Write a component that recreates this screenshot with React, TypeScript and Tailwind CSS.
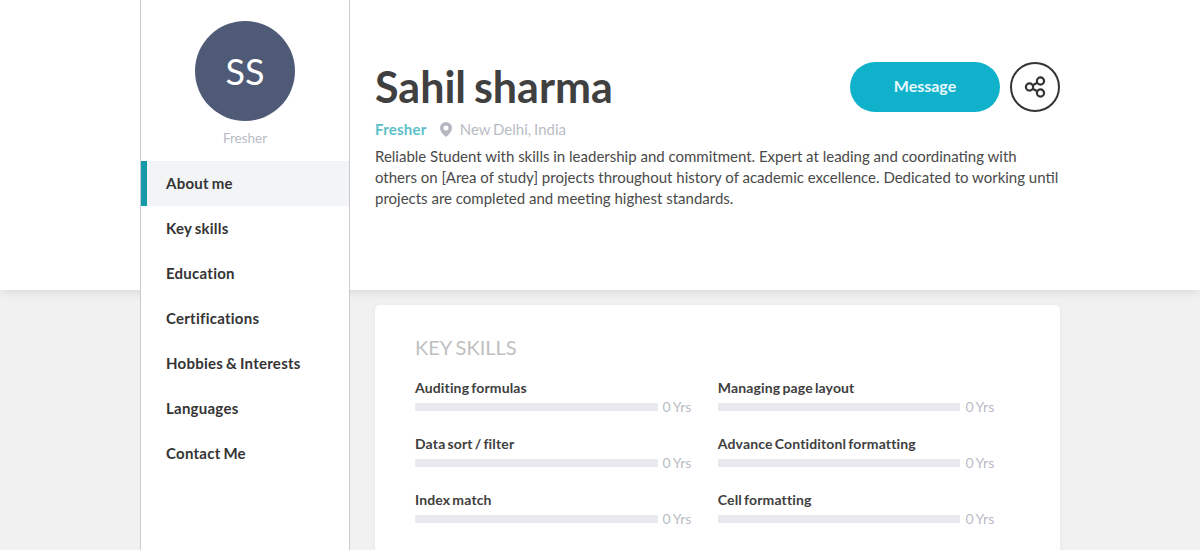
import React from "react";

const nav = ["About me", "Key skills", "Education", "Certifications", "Hobbies & Interests", "Languages", "Contact Me"];
const skills = ["Auditing formulas", "Managing page layout", "Data sort / filter", "Advance Contiditonl formatting", "Index match", "Cell formatting"];

export default function App() {
  return (
    <div className="relative h-[550px] w-[1200px] overflow-hidden bg-[#f1f1f1] font-['Lato',sans-serif]">
      <div className="absolute inset-x-0 top-0 h-[290px] bg-white shadow-[0_2px_10px_rgba(0,0,0,0.1)]" />
      <div className="relative flex h-full pl-[140px]">
        <aside className="h-full w-[210px] shrink-0 border-x border-[#c8cbd3] bg-white pt-[21px]">
          <div className="mx-auto flex h-[100px] w-[100px] items-center justify-center rounded-full bg-[#4f5b76] text-[36px] leading-none text-white">SS</div>
          <p className="mt-[9px] text-center text-[13.5px] leading-[17px] text-[#b9bcc5]">Fresher</p>
          <nav className="mt-[14px]">
            {nav.map((n, i) => (
              <div
                key={n}
                className={
                  i === 0
                    ? "flex h-[45px] items-center border-l-[6px] border-[#1899a8] bg-[#f3f4f6] pl-[19px] text-[15px] font-bold tracking-[0.25px] [word-spacing:-1px] text-[#343434]"
                    : "flex h-[45px] items-center pl-[25px] text-[15px] font-bold tracking-[0.25px] [word-spacing:-1px] text-[#343434]"
                }
              >
                {n}
              </div>
            ))}
          </nav>
        </aside>
        <main className="ml-[25px] w-[685px]">
          <div className="h-[305px] pt-[62px]">
            <div className="flex items-start justify-between">
              <h1 className="-mt-[1px] text-[43px] font-bold leading-[52px] [word-spacing:-2.5px] text-[#404040]">Sahil sharma</h1>
              <div className="flex items-center gap-[10px]">
                <button className="h-[50px] w-[150px] rounded-full bg-[#10b2cb] pb-[2px] text-[16px] font-bold text-[#e8f8fb]">Message</button>
                <div className="flex h-[50px] w-[50px] items-center justify-center rounded-full border-2 border-[#343434]">
                  <svg width="24" height="24" viewBox="0 0 24 24" fill="none" stroke="#343434" strokeWidth="2.2">
                    <circle cx="17.5" cy="6" r="3.6" />
                    <circle cx="6.500" cy="12" r="3.6" />
                    <circle cx="17.5" cy="18" r="3.6" />
                    <path d="M9.700 10.300 14.300 7.700M9.700 13.700l4.600 2.600" />
                  </svg>
                </div>
              </div>
            </div>
            <div className="mt-[6px] flex items-center text-[15px] leading-[20px]">
              <span className="font-bold tracking-[0.25px] text-[#5cbfc9]">Fresher</span>
              <svg className="ml-[13px]" width="12" height="15" viewBox="0 0 12 15">
                <path fillRule="evenodd" fill="#b5b8c1" d="M6 0a6 6 0 0 1 6 6c0 3.500-4 7.500-6 9-2-1.500-6-5.500-6-9a6 6 0 0 1 6-6Zm0 3.500a2.500 2.500 0 1 0 0 5 2.500 2.500 0 0 0 0-5Z" />
              </svg>
              <span className="ml-[8px] [word-spacing:-1px] text-[#b9bcc5]">New Delhi, India</span>
            </div>
            <p className="mt-[6.5px] text-[15px] leading-[21px] text-[#4a4a4a]">
              Reliable Student with skills in leadership and commitment. Expert at leading and coordinating with others on [Area of study] projects throughout history of academic excellence. Dedicated to working until projects are completed and meeting highest standards.
            </p>
          </div>
          <section className="h-[300px] rounded-[5px] bg-white px-[40px] pt-[29px] shadow-[0_0_6px_rgba(0,0,0,0.04)]">
            <h2 className="text-[20px] leading-[26px] [word-spacing:-1px] text-[#c0c0c0]">KEY SKILLS</h2>
            <div className="mt-[18px] grid grid-cols-[277px_277px] gap-x-[25.8px] gap-y-[18px]">
              {skills.map((s) => (
                <div key={s}>
                  <p className="text-[14px] font-bold leading-[20px] tracking-[0.15px] [word-spacing:-1.5px] text-[#404040]">{s}</p>
                  <div className="flex h-[18px] items-center">
                    <div className="h-[8px] w-[242.6px] shrink-0 bg-[#e9eaee]" />
                    <span className="mb-[2px] ml-[5px] whitespace-nowrap text-[14px] [word-spacing:-1px] text-[#b9bcc5]">0 Yrs</span>
                  </div>
                </div>
              ))}
            </div>
          </section>
        </main>
      </div>
    </div>
  );
}
